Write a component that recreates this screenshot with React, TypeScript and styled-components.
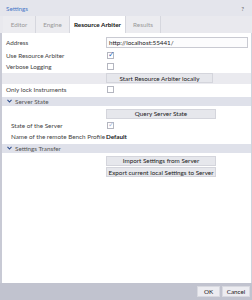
import React from 'react'
import styled, { createGlobalStyle } from 'styled-components'

const GlobalStyle = createGlobalStyle`
  html, body {
    margin: 0;
    padding: 0;
    background: #c4c6d1;
  }
  * {
    box-sizing: border-box;
  }
`

const Window = styled.div`
  width: 252px;
  height: 300px;
  display: flex;
  flex-direction: column;
  font-family: Lato, 'Noto Sans', sans-serif;
  font-size: 6.3px;
  color: #333;
  background: #c4c6d1;
  overflow: hidden;
  white-space: nowrap;
`

const TitleBar = styled.div`
  height: 16px;
  display: flex;
  align-items: center;
  justify-content: space-between;
  padding: 0 8px 0 6px;
  background: #e4e5ec;
  color: #4a78c8;
`

const Help = styled.span`
  color: #666;
`

const TabBar = styled.div`
  height: 17px;
  display: flex;
  align-items: stretch;
  padding-left: 3px;
  background: #e9e9ee;
`

const Tab = styled.div<{ $active?: boolean; $width: number }>`
  display: flex;
  align-items: center;
  justify-content: center;
  width: ${(p) => p.$width}px;
  border-right: 1px solid #d6d7de;
  background: ${(p) => (p.$active ? '#ffffff' : '#ececf0')};
  color: ${(p) => (p.$active ? '#111' : '#999')};
  font-weight: ${(p) => (p.$active ? 700 : 400)};
`

const Body = styled.div`
  flex: 1;
  background: #ffffff;
  border-left: 2px solid #c8cad5;
  border-right: 1px solid #d0d2dc;
  display: flex;
  flex-direction: column;
  padding-top: 2.5px;
`

const Row = styled.div<{ $shaded?: boolean; $indent?: boolean; $tall?: boolean }>`
  height: ${(p) => (p.$tall ? 14 : 11.5)}px;
  display: flex;
  align-items: center;
  padding-left: ${(p) => (p.$indent ? 9 : 4)}px;
  background: ${(p) => (p.$shaded ? '#eaeaef' : 'transparent')};
`

const Label = styled.div<{ $indent?: boolean }>`
  width: ${(p) => (p.$indent ? 95 : 100)}px;
  flex-shrink: 0;
  color: #444;
`

const AddressInput = styled.div`
  width: 142px;
  height: 11px;
  display: flex;
  align-items: center;
  padding-left: 2px;
  border: 1px solid #c9cad2;
  background: #fcfcfd;
  color: #222;
`

const Check = styled.div<{ $checked?: boolean; $muted?: boolean }>`
  width: 7px;
  height: 7px;
  border: 1px solid #b4b6c0;
  background: #fff;
  position: relative;
  margin-left: 1px;
  &::after {
    content: ${(p) => (p.$checked ? "'✓'" : 'none')};
    position: absolute;
    left: 0px;
    top: -3px;
    font-size: 8px;
    font-family: 'DejaVu Sans', sans-serif;
    color: ${(p) => (p.$muted ? '#aab6d6' : '#2f5fb8')};
    font-weight: 700;
  }
`

const Button = styled.div<{ $width: number }>`
  width: ${(p) => p.$width}px;
  height: 10px;
  display: flex;
  align-items: center;
  justify-content: center;
  background: #e6e7ec;
  border: 1px solid #d4d5dc;
  color: #222;
`

const SectionWrap = styled.div`
  height: 12.5px;
  padding: 1px 0 2px;
`

const Section = styled.div`
  height: 100%;
  display: flex;
  align-items: center;
  gap: 3px;
  padding-left: 5px;
  background: #dfe1ea;
  color: #555;
`

const Value = styled.div`
  font-weight: 700;
  color: #222;
`

const Footer = styled.div`
  height: 17px;
  display: flex;
  align-items: center;
  justify-content: flex-end;
  gap: 2px;
  padding-right: 2px;
  background: #c1c3cf;
`

const FooterButton = styled.div<{ $width: number }>`
  width: ${(p) => p.$width}px;
  height: 11px;
  display: flex;
  align-items: center;
  justify-content: center;
  background: #ececf1;
  border: 1px solid #d8d9e0;
  color: #222;
`

const Chevron = () => (
  <svg width="5" height="4" viewBox="0 0 5 4">
    <path d="M0.5 0.8 L2.5 3 L4.5 0.8" fill="none" stroke="#2f4f8f" strokeWidth="1.1" />
  </svg>
)

const tabs = [
  { name: 'Editor', width: 33 },
  { name: 'Engine', width: 34 },
  { name: 'Resource Arbiter', width: 56, active: true },
  { name: 'Results', width: 35 },
]

export default function App() {
  return (
    <>
      <GlobalStyle />
      <Window>
        <TitleBar>
          <span>Settings</span>
          <Help>?</Help>
        </TitleBar>
        <TabBar>
          {tabs.map((t) => (
            <Tab key={t.name} $active={t.active} $width={t.width}>
              {t.name}
            </Tab>
          ))}
        </TabBar>
        <Body>
          <Row $tall>
            <Label>Address</Label>
            <AddressInput>http://localhost:55441/</AddressInput>
          </Row>
          <Row>
            <Label>Use Resource Arbiter</Label>
            <Check $checked />
          </Row>
          <Row>
            <Label>Verbose Logging</Label>
            <Check />
          </Row>
          <Row $shaded>
            <Label />
            <Button $width={107}>Start Resource Arbiter locally</Button>
          </Row>
          <Row>
            <Label>Only lock Instruments</Label>
            <Check />
          </Row>
          <SectionWrap>
            <Section>
              <Chevron />
              Server State
            </Section>
          </SectionWrap>
          <Row $indent>
            <Label $indent />
            <Button $width={110}>Query Server State</Button>
          </Row>
          <Row $indent>
            <Label $indent>State of the Server</Label>
            <Check $checked $muted />
          </Row>
          <Row $indent>
            <Label $indent>Name of the remote Bench Profile</Label>
            <Value>Default</Value>
          </Row>
          <SectionWrap>
            <Section>
              <Chevron />
              Settings Transfer
            </Section>
          </SectionWrap>
          <Row $indent>
            <Label $indent />
            <Button $width={110}>Import Settings from Server</Button>
          </Row>
          <Row $indent>
            <Label $indent />
            <Button $width={110}>Export current local Settings to Server</Button>
          </Row>
        </Body>
        <Footer>
          <FooterButton $width={23}>OK</FooterButton>
          <FooterButton $width={28}>Cancel</FooterButton>
        </Footer>
      </Window>
    </>
  )
}
